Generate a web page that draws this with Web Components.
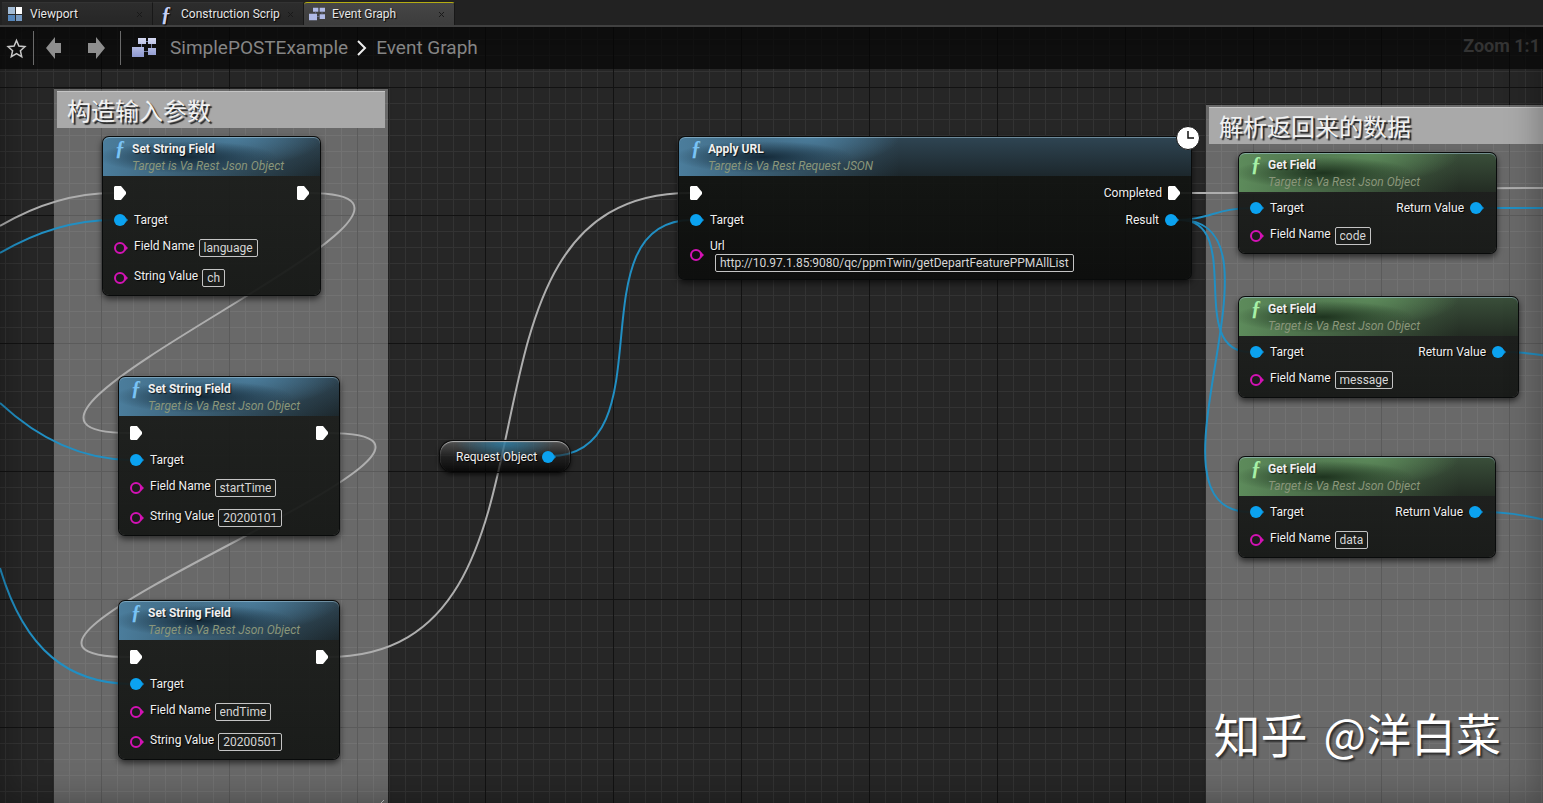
<!DOCTYPE html>
<html lang="zh-CN">
<head>
<meta charset="utf-8">
<title>SimplePOSTExample - Event Graph</title>
<style>
  html, body {
    height: 100%;
    margin: 0;
    overflow: hidden;
    background: #222;
    color: #f0f0f0;
    font: 12px/16px Roboto, "Noto Sans CJK SC", sans-serif;
  }
</style>
</head>
<body>

<bp-editor>
  <bp-tab slot="tabs" icon="viewport">Viewport</bp-tab>
  <bp-tab slot="tabs" icon="function">Construction Scrip</bp-tab>
  <bp-tab slot="tabs" icon="graph" active>Event Graph</bp-tab>

  <bp-toolbar slot="toolbar" asset="SimplePOSTExample" graph="Event Graph" zoom="Zoom 1:1"></bp-toolbar>

  <bp-comment style="--x: 54px; --y: 62px; --w: 334px">构造输入参数</bp-comment>
  <bp-comment style="--x: 1206px; --y: 78px; --w: 480px">解析返回来的数据</bp-comment>

  <bp-wires></bp-wires>

  <bp-node name="Set String Field" target="Va Rest Json Object" style="--x: 103px; --y: 110px; --w: 217px">
    <bp-row exec><bp-pin type="exec"></bp-pin><bp-pin type="exec" out></bp-pin></bp-row>
    <bp-row><bp-pin type="object" label="Target"></bp-pin></bp-row>
    <bp-row field><bp-pin type="string" label="Field Name" value="language"></bp-pin></bp-row>
    <bp-row field><bp-pin type="string" label="String Value" value="ch"></bp-pin></bp-row>
  </bp-node>

  <bp-node name="Set String Field" target="Va Rest Json Object" style="--x: 119px; --y: 350px; --w: 220px">
    <bp-row exec><bp-pin type="exec"></bp-pin><bp-pin type="exec" out></bp-pin></bp-row>
    <bp-row><bp-pin type="object" label="Target"></bp-pin></bp-row>
    <bp-row field><bp-pin type="string" label="Field Name" value="startTime"></bp-pin></bp-row>
    <bp-row field><bp-pin type="string" label="String Value" value="20200101"></bp-pin></bp-row>
  </bp-node>

  <bp-node name="Set String Field" target="Va Rest Json Object" style="--x: 119px; --y: 574px; --w: 220px">
    <bp-row exec><bp-pin type="exec"></bp-pin><bp-pin type="exec" out></bp-pin></bp-row>
    <bp-row><bp-pin type="object" label="Target"></bp-pin></bp-row>
    <bp-row field><bp-pin type="string" label="Field Name" value="endTime"></bp-pin></bp-row>
    <bp-row field><bp-pin type="string" label="String Value" value="20200501"></bp-pin></bp-row>
  </bp-node>

  <bp-node name="Apply URL" target="Va Rest Request JSON" latent style="--x: 679px; --y: 110px; --w: 512px">
    <bp-row exec><bp-pin type="exec"></bp-pin><bp-pin type="exec" label="Completed" out></bp-pin></bp-row>
    <bp-row><bp-pin type="object" label="Target"></bp-pin><bp-pin type="object" label="Result" out></bp-pin></bp-row>
    <bp-row stacked><bp-pin type="string" label="Url" stacked value="http://10.97.1.85:9080/qc/ppmTwin/getDepartFeaturePPMAllList"></bp-pin></bp-row>
  </bp-node>

  <bp-variable style="--x: 440px; --y: 414px">Request Object</bp-variable>

  <bp-node pure name="Get Field" target="Va Rest Json Object" style="--x: 1239px; --y: 126px; --w: 257px">
    <bp-row><bp-pin type="object" label="Target"></bp-pin><bp-pin type="object" label="Return Value" out></bp-pin></bp-row>
    <bp-row field><bp-pin type="string" label="Field Name" value="code"></bp-pin></bp-row>
  </bp-node>

  <bp-node pure name="Get Field" target="Va Rest Json Object" style="--x: 1239px; --y: 270px; --w: 279px">
    <bp-row><bp-pin type="object" label="Target"></bp-pin><bp-pin type="object" label="Return Value" out></bp-pin></bp-row>
    <bp-row field><bp-pin type="string" label="Field Name" value="message"></bp-pin></bp-row>
  </bp-node>

  <bp-node pure name="Get Field" target="Va Rest Json Object" style="--x: 1239px; --y: 430px; --w: 256px">
    <bp-row><bp-pin type="object" label="Target"></bp-pin><bp-pin type="object" label="Return Value" out></bp-pin></bp-row>
    <bp-row field><bp-pin type="string" label="Field Name" value="data"></bp-pin></bp-row>
  </bp-node>

  <bp-watermark slot="overlay"><span slot="site">知乎</span>@洋白菜</bp-watermark>
</bp-editor>

<script>
  // Fills the shadow root of an element
  function render(el, html) {
    el.attachShadow({ mode: 'open' }).innerHTML = html;
  }

  const GRAPH_SHAPE = 'M6 0h8v6H6zM16 0h8v6h-8zM0 9h12v10H0zM16 10h8v7h-8z';
  const GRAPH_LINKS = 'M14 3h2v1h-2zM9 6h1v3H9zM19 6h1v4h-1zM12 13h4v1h-4z';

  const ICONS = {
    viewport: `
      <svg width="16" height="16" viewBox="0 0 16 16">
        <rect x="1" y="1" width="7" height="7" fill="#a3bcd6"/>
        <rect x="9" y="1" width="6" height="7" fill="#fff"/>
        <rect x="1" y="9" width="7" height="6" fill="#5586bb"/>
        <rect x="9" y="9" width="6" height="6" fill="#7699c0"/>
      </svg>`,
    graph: `
      <svg width="16" height="14" viewBox="0 0 24 19">
        <path d="${GRAPH_SHAPE}" fill="#b0bae6"/>
        <path d="${GRAPH_LINKS}" fill="#6f779c"/>
      </svg>`
  };

  // Window frame: tab strip on top, graph canvas below
  class BpEditor extends HTMLElement {
    constructor() {
      super();
      render(this, `
        <style>
          :host {
            display: flex;
            flex-direction: column;
            height: 100%;
          }
          .tabs {
            display: flex;
            align-items: flex-end;
            height: 25px;
            padding: 0 2px;
            background: #222;
            border-bottom: 2px solid #414141;
          }
          main {
            position: relative;
            flex: 1;
            overflow: hidden;
            background:
              linear-gradient(#121212 1px, transparent 1px) 101px 60px / 128px 128px,
              linear-gradient(to right, #121212 1px, transparent 1px) 101px 60px / 128px 128px,
              linear-gradient(#333 1px, transparent 1px) 101px 60px / 16px 16px,
              linear-gradient(to right, #333 1px, transparent 1px) 101px 60px / 16px 16px,
              #262626;
          }
          /* darkens the borders of the canvas */
          .vignette {
            position: absolute;
            inset: 0;
            pointer-events: none;
            box-shadow: inset 0 0 36px rgba(0, 0, 0, .35);
          }
        </style>
        <div class="tabs"><slot name="tabs"></slot></div>
        <main>
          <slot></slot>
          <div class="vignette"></div>
          <slot name="toolbar"></slot>
          <slot name="overlay"></slot>
        </main>
      `);
    }
  }

  class BpTab extends HTMLElement {
    constructor() {
      super();
      const icon = this.getAttribute('icon');
      render(this, `
        <style>
          :host {
            display: flex;
            align-items: center;
            box-sizing: border-box;
            width: 151px;
            height: 23px;
            padding: 0 9px 0 5px;
            background: linear-gradient(#2d2d2d, #262626);
            border-top: 1px solid #333;
            border-right: 1px solid #181818;
          }
          :host([active]) {
            background: linear-gradient(#464646, #3c3c3c);
            border-top: 1px solid #b5ad12;
            border-radius: 3px 3px 0 0;
          }
          button {
            padding: 0;
            border: 0;
            background: none;
            color: #e6e6e6;
            font: inherit;
            text-shadow: 1px 1px 1px #000;
          }
          .name {
            display: flex;
            align-items: center;
            gap: 7px;
            flex: 1;
            white-space: nowrap;
          }
          .icon {
            display: flex;
            justify-content: center;
            width: 16px;
          }
          .f {
            color: #c5d0f5;
            font: italic bold 20px/16px "Liberation Serif", serif;
          }
          .close svg { display: block; }
        </style>
        <button class="name">
          <span class="icon">${ICONS[icon] || '<span class="f" aria-hidden="true">ƒ</span>'}</span>
          <slot></slot>
        </button>
        <button class="close" aria-label="Close">
          <svg width="7" height="7"><path d="M1 1l5 5M6 1l-5 5" stroke="#191919"/></svg>
        </button>
      `);
    }
  }

  class BpToolbar extends HTMLElement {
    constructor() {
      super();
      render(this, `
        <style>
          :host {
            position: relative;
            display: flex;
            align-items: center;
            height: 42px;
            padding: 0 3px 0 6px;
            background: rgba(6, 6, 6, .72);
            color: #858585;
            font-size: 19px;
            line-height: 24px;
          }
          button {
            display: flex;
            padding: 0;
            border: 0;
            background: none;
            color: inherit;
            font: inherit;
          }
          hr {
            width: 1px;
            height: 34px;
            margin: 0;
            border: 0;
            background: #6a6a6a;
          }
          .star { margin-right: 6px; }
          .history {
            display: flex;
            gap: 23px;
            padding: 0 15px 0 11px;
          }
          nav {
            display: flex;
            align-items: center;
            gap: 9px;
            flex: 1;
            padding: 0 0 1px 11px;
          }
          nav > svg:first-child { margin-right: 5px; }
          .zoom {
            padding-bottom: 4px;
            color: #333;
            font-size: 18px;
            font-weight: bold;
          }
        </style>
        <button class="star" aria-label="Favorite">
          <svg width="21" height="21" viewBox="0 0 21 21">
            <path d="M10.500 2.500l2.400 5.600 6 .600-4.500 4 1.300 5.900-5.200-3.100-5.200 3.100 1.300-5.900-4.500-4 6-.600z" fill="none" stroke="#c8c8c8" stroke-width="1.500"/>
          </svg>
        </button>
        <hr>
        <div class="history">
          <button aria-label="Back">
            <svg width="18" height="22"><path d="M1 11L10 0v6h6v10h-6v6z" fill="#8e8e8e"/></svg>
          </button>
          <button aria-label="Forward">
            <svg width="19" height="22"><path d="M19 11L10 0v6H2v10h8v6z" fill="#8e8e8e"/></svg>
          </button>
        </div>
        <hr>
        <nav>
          <svg width="24" height="19" viewBox="0 0 24 19">
            <defs>
              <linearGradient id="g" x2="0" y2="1">
                <stop offset="0" stop-color="#d5d9f2"/><stop offset="1" stop-color="#8c97cf"/>
              </linearGradient>
            </defs>
            <path d="${GRAPH_SHAPE}" fill="url(#g)"/>
            <path d="${GRAPH_LINKS}" fill="#6f779c"/>
          </svg>
          <button>${this.getAttribute('asset')}</button>
          <svg width="10" height="16"><path d="M1 1l7 7-7 7" fill="none" stroke="#eee" stroke-width="2"/></svg>
          <button>${this.getAttribute('graph')}</button>
        </nav>
        <span class="zoom">${this.getAttribute('zoom')}</span>
      `);
    }
  }

  // Comment box that groups nodes, runs past the bottom of the view
  class BpComment extends HTMLElement {
    constructor() {
      super();
      render(this, `
        <style>
          :host {
            position: absolute;
            left: var(--x);
            top: var(--y);
            bottom: -8px;
            box-sizing: border-box;
            width: var(--w);
            padding: 2px 3px;
            background: rgba(255, 255, 255, .31);
            box-shadow: 0 0 3px rgba(0, 0, 0, .4);
          }
          h2 {
            margin: 0;
            padding: 3px 10px 4px;
            background: #a9a9a9;
            border-top: 1px solid #c4c4c4;
            color: #f2f2f2;
            font: 24px/29px "Noto Sans CJK SC", sans-serif;
            text-shadow: 2px 2px 1px #222;
          }
          svg {
            position: absolute;
            right: 3px;
            bottom: 0;
          }
        </style>
        <h2><slot></slot></h2>
        <svg width="12" height="12"><path d="M1 11L11 1M6 11l5-5" stroke="#ccc"/></svg>
      `);
    }
  }

  // x1, y1, x2, y2, tangent length
  const EXEC_WIRES = [
    [308, 166, 130, 406, 214],
    [327, 406, 130, 630, 226],
    [327, 630, 690, 166, 266],
    [1180, 166, 1560, 161, 180]
  ];
  const OBJECT_WIRES = [
    [550, 429, 692, 193, 120],
    [1174, 193, 1252, 181, 36],
    [1180, 193, 1250, 325, 65],
    [1180, 193, 1250, 485, 118],
    [1480, 181, 1560, 181, 30],
    [1504, 325, 1590, 333, 40],
    [1482, 485, 1590, 497, 50]
  ];

  class BpWires extends HTMLElement {
    constructor() {
      super();
      const path = ([x1, y1, x2, y2, t]) => `<path d="M${x1} ${y1}C${x1 + t} ${y1} ${x2 - t} ${y2} ${x2} ${y2}"/>`;
      // the wires whose source node is off screen start at the left edge
      render(this, `
        <style>
          :host {
            position: absolute;
            inset: 0;
          }
          svg {
            display: block;
            width: 100%;
            height: 100%;
            fill: none;
            stroke-width: 2px;
          }
        </style>
        <svg>
          <g stroke="#aeaeae">
            <path d="M0 199Q56 166 114 166"/>
            ${EXEC_WIRES.map(path).join('')}
          </g>
          <g stroke="#218fc3">
            <path d="M0 226Q56 193 114 193"/>
            <path d="M0 376Q60 432 130 433"/>
            <path d="M0 541C25 625 70 656 130 657"/>
            ${OBJECT_WIRES.map(path).join('')}
          </g>
        </svg>
      `);
    }
  }

  class BpNode extends HTMLElement {
    constructor() {
      super();
      render(this, `
        <style>
          :host {
            --glow: #4b7d9c;
            --mid: #2f4553;
            --dim: #1c272c;
            --blot: rgba(16, 36, 50, .9);
            --glyph: #79c3f5;
            position: absolute;
            left: var(--x);
            top: var(--y);
            width: var(--w);
            border-radius: 6px;
            background: linear-gradient(rgba(27, 29, 27, .93), rgba(20, 22, 20, .93));
            box-shadow: 0 0 0 1px #090b0b, 0 3px 6px 1px rgba(0, 0, 0, .6);
          }
          :host([latent]) {
            background: linear-gradient(rgba(20, 23, 20, .93), rgba(12, 13, 12, .93));
          }
          :host([pure]) {
            --glow: #5d8b5b;
            --mid: #3a4f3a;
            --dim: #232c23;
            --blot: rgba(25, 45, 26, .9);
            --glyph: #a6f0a6;
          }
          header {
            display: grid;
            grid-template-columns: 18px 1fr;
            padding: 4px 11px 1px;
            line-height: 17px;
            border-radius: 6px 6px 0 0;
            box-shadow: inset 0 1px rgba(170, 205, 225, .5);
            background:
              radial-gradient(90px 16px at 84px 20px, var(--blot), transparent),
              radial-gradient(90px 30px at 130px 0, var(--glow), transparent),
              linear-gradient(to right, var(--glow), transparent 220px),
              linear-gradient(var(--mid), var(--dim));
          }
          h3 {
            margin: 0;
            font-size: 12px;
            text-shadow: 1px 1px 1px rgba(0, 0, 0, .7);
          }
          p {
            grid-column: 2;
            margin: 0;
            color: #8a967a;
            font-style: italic;
          }
          .f {
            padding-left: 1px;
            color: var(--glyph);
            font: italic bold 20px/15px "Liberation Serif", serif;
          }
          .body {
            padding: 3px 10px 2px;
          }
          .clock {
            position: absolute;
            right: -9px;
            top: -11px;
          }
        </style>
        <header>
          <span class="f" aria-hidden="true">ƒ</span>
          <h3>${this.getAttribute('name')}</h3>
          <p>Target is ${this.getAttribute('target')}</p>
        </header>
        <div class="body"><slot></slot></div>
        ${this.hasAttribute('latent') ? `
          <svg class="clock" width="24" height="24">
            <circle cx="12" cy="12" r="11.500" fill="#fff" stroke="#111"/>
            <path d="M12 5v7h6" fill="none" stroke="#111" stroke-width="1.500"/>
          </svg>` : ''}
      `);
    }
  }

  class BpRow extends HTMLElement {
    constructor() {
      super();
      render(this, `
        <style>
          :host {
            display: flex;
            align-items: center;
            justify-content: space-between;
            box-sizing: border-box;
            height: 26px;
          }
          :host([exec]) { height: 28px; }
          :host([field]) {
            height: 30px;
            padding-bottom: 1px;
          }
          :host([stacked]) {
            height: 44px;
            padding-bottom: 1px;
          }
        </style>
        <slot></slot>
      `);
    }
  }

  const PINS = {
    exec: '<svg width="14" height="14"><path d="M2 0h6l5 6v2l-5 6H2l-1-1V1z" fill="#fff"/></svg>',
    object: '<svg width="15" height="14"><path d="M11 3l4 4-4 4z" fill="#0b8fd6"/><circle cx="7" cy="7" r="6" fill="#0ba2f0"/></svg>',
    string: '<svg width="15" height="14"><circle cx="7" cy="7" r="5" fill="none" stroke="#d312b4" stroke-width="2"/><path d="M12 4l3 3-3 3z" fill="#d312b4"/></svg>'
  };

  class BpPin extends HTMLElement {
    constructor() {
      super();
      const label = this.getAttribute('label');
      const value = this.getAttribute('value');
      let text = '';
      if (value) {
        text = `<div class="field"><label for="v">${label}</label><input id="v" value="${value}"></div>`;
      } else if (label) {
        text = `<span>${label}</span>`;
      }
      render(this, `
        <style>
          :host {
            display: flex;
            align-items: center;
            gap: 6px;
            white-space: nowrap;
            text-shadow: 1px 1px 1px #000;
          }
          :host([out]) {
            flex-direction: row-reverse;
            gap: 5px;
          }
          :host([out][type="object"]) { padding-right: 2px; }
          .field {
            display: flex;
            align-items: center;
            gap: 4px;
          }
          label { padding-bottom: 3px; }
          :host([stacked]) .field {
            flex-direction: column;
            align-items: flex-start;
            gap: 0;
          }
          :host([stacked]) label { padding: 0; }
          :host([stacked]) input { margin-left: 5px; }
          input {
            field-sizing: content;
            box-sizing: border-box;
            height: 18px;
            padding: 0 4px;
            border: 1px solid #c4c4c4;
            border-radius: 2px;
            background: none;
            color: #d6d6d6;
            font: inherit;
            outline: 0;
          }
        </style>
        ${PINS[this.getAttribute('type')]}
        ${text}
      `);
    }
  }

  // Pill shaped variable getter
  class BpVariable extends HTMLElement {
    constructor() {
      super();
      render(this, `
        <style>
          :host {
            position: absolute;
            left: var(--x);
            top: var(--y);
            display: flex;
            align-items: center;
            gap: 4px;
            box-sizing: border-box;
            height: 31px;
            padding: 0 14px 0 16px;
            border-radius: 13px;
            background:
              radial-gradient(50px 18px at 50% 2px, rgba(38, 130, 175, .75), transparent),
              linear-gradient(rgba(110, 110, 110, .6), rgba(30, 30, 30, .6) 50%, rgba(0, 0, 0, .75));
            box-shadow: inset 0 1px 1px #b5b5b5, 0 0 0 1px #0b0b0b, 0 2px 4px 1px rgba(0, 0, 0, .6);
            text-shadow: 1px 1px 1px #000;
            white-space: nowrap;
          }
        </style>
        <slot></slot>
        ${PINS.object}
      `);
    }
  }

  class BpWatermark extends HTMLElement {
    constructor() {
      super();
      render(this, `
        <style>
          :host {
            position: absolute;
            right: 42px;
            bottom: 42px;
            display: flex;
            align-items: center;
            gap: 16px;
            color: #fff;
            font: 45px/56px "Noto Sans CJK SC", sans-serif;
            text-shadow: 2px 2px 2px rgba(0, 0, 0, .6);
            white-space: nowrap;
          }
          .site { font-size: 47px; }
        </style>
        <span class="site"><slot name="site"></slot></span>
        <span><slot></slot></span>
      `);
    }
  }

  customElements.define('bp-editor', BpEditor);
  customElements.define('bp-tab', BpTab);
  customElements.define('bp-toolbar', BpToolbar);
  customElements.define('bp-comment', BpComment);
  customElements.define('bp-wires', BpWires);
  customElements.define('bp-node', BpNode);
  customElements.define('bp-row', BpRow);
  customElements.define('bp-pin', BpPin);
  customElements.define('bp-variable', BpVariable);
  customElements.define('bp-watermark', BpWatermark);
</script>
</body>
</html>
